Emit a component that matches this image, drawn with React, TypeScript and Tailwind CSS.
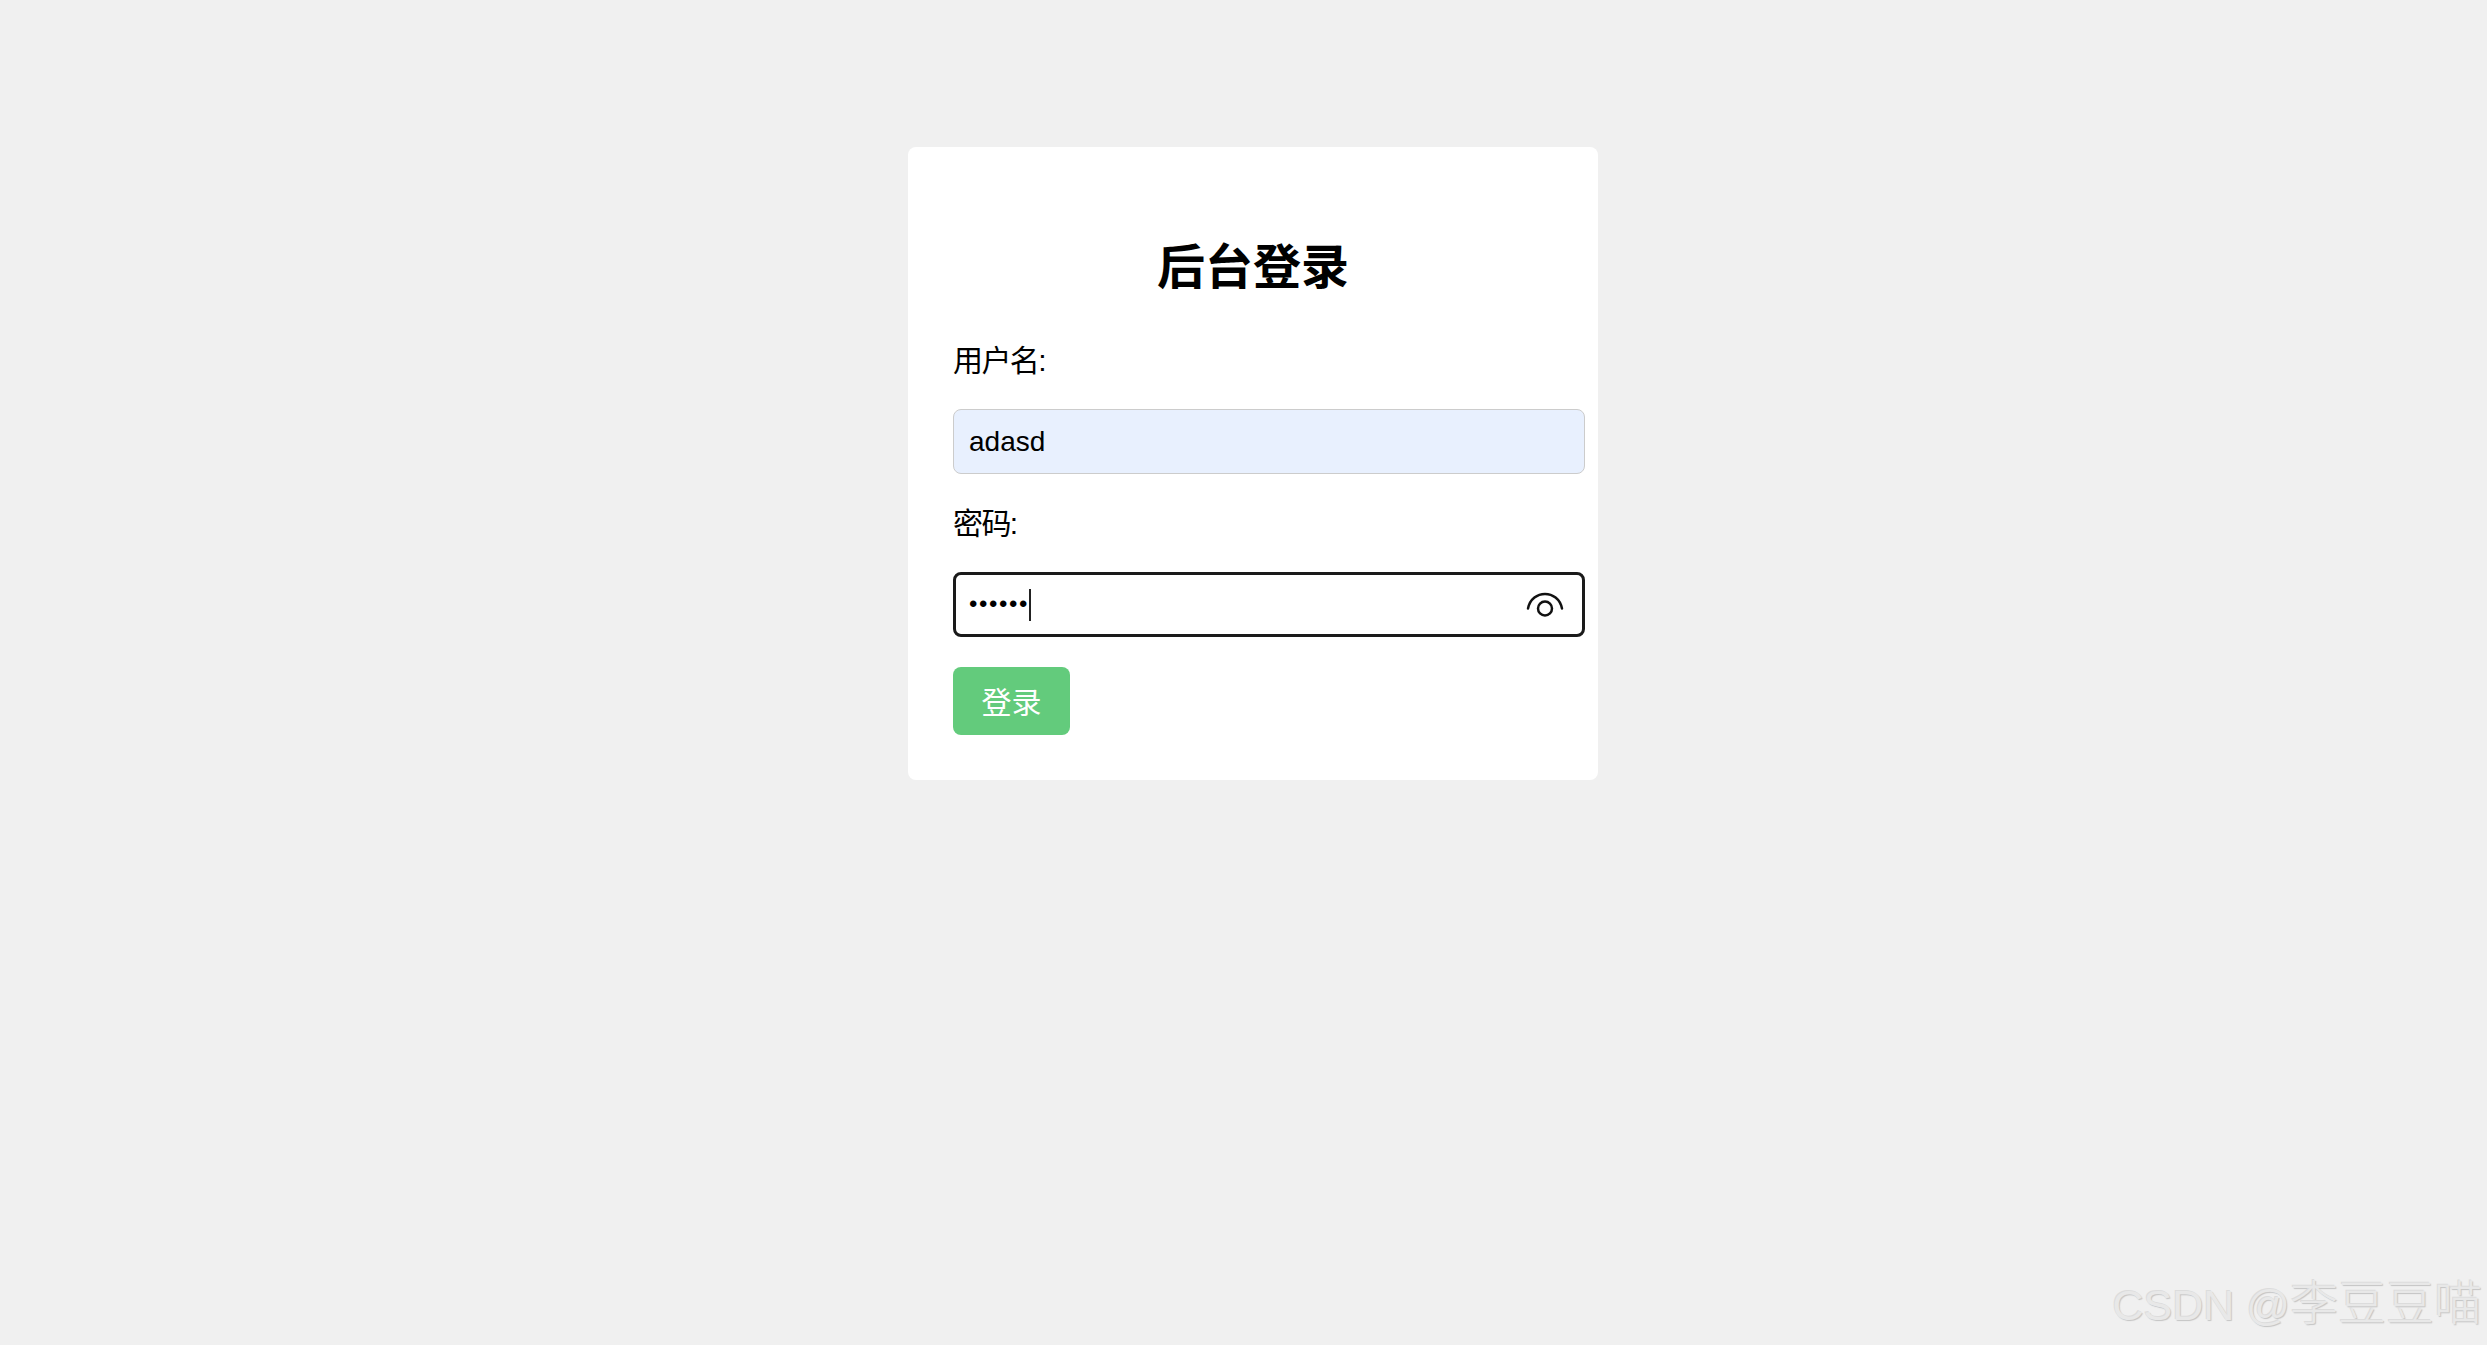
export default function App() {
  const font = "font-['Liberation_Sans','Noto_Sans_CJK_SC',sans-serif]";
  return (
    <div className={`relative h-[1345px] w-[2487px] overflow-hidden bg-[#f0f0f0] pt-[147px] text-black ${font}`}>
      <div className="ml-[908px] h-[633px] w-[690px] rounded-[8px] bg-white px-[45px] pt-[90px]">
        <h1 className="h-[62px] text-center text-[48px] leading-[62px] font-bold">后台登录</h1>
        <label className="mt-[42px] block h-[40px] text-[30px] leading-[40px] tracking-[-1.6px]">用户名:</label>
        <div className="mt-[28px] flex h-[65px] w-[632px] items-center rounded-[8px] border-[1.5px] border-[#cccccc] bg-[#e8f0fe] px-[15px] text-[28px]">
          adasd
        </div>
        <label className="mt-[30px] block h-[40px] text-[30px] leading-[40px] tracking-[-1.6px]">密码:</label>
        <div className="mt-[28px] flex h-[65px] w-[632px] items-center rounded-[8px] border-[3px] border-[#1a1a1a] bg-white pr-[18px] pl-[13px]">
          <span className="mb-[2px] text-[24px] leading-none tracking-[1.6px]">••••••</span>
          <span className="h-[32px] w-[2px] bg-[#222222]" />
          <svg className="ml-auto" width="38" height="28" viewBox="0 0 38 28" fill="none" stroke="#111111" strokeWidth="2.5">
            <path d="M2 17.5 C6 -2 32 -2 36 17.5" strokeLinecap="round" />
            <circle cx="19" cy="17.5" r="7" />
          </svg>
        </div>
        <button className="mt-[30px] block h-[68px] w-[117px] rounded-[8px] bg-[#63cb7c] pt-[2px] text-center text-[30px] text-white">
          登录
        </button>
      </div>
      <div className="absolute right-[5px] bottom-[12px] text-[43px] leading-[56px] font-light text-[#e8e8e8] [text-shadow:-1px_-1px_0_#dcdcdc,1px_1px_1px_#c4c4c4]">
        CSDN @<span className="text-[48px]">李豆豆喵</span>
      </div>
    </div>
  );
}
